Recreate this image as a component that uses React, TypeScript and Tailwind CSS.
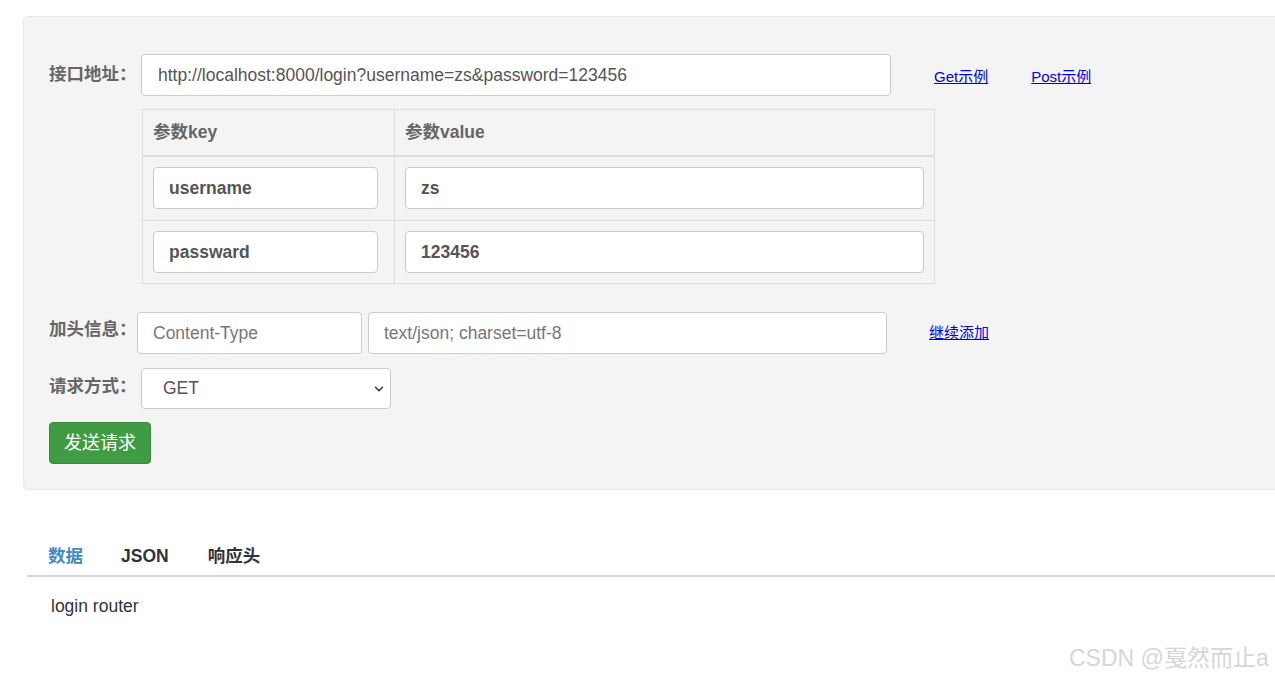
import { ChevronDown } from "lucide-react";

const font = { fontFamily: '"Liberation Sans", Arial, "Noto Sans CJK SC", sans-serif' };

const inputCls =
  "h-[42px] rounded-[4px] border border-[#cccccc] bg-white px-[15px] text-[17.5px] text-[#555555] outline-none";

function Label({ text, w }: { text: string; w: string }) {
  return (
    <label className={`${w} shrink-0 whitespace-nowrap text-[17.5px] font-bold text-[#666666]`}>{text}</label>
  );
}

function ParamRow({ k, v, last }: { k: string; v: string; last?: boolean }) {
  return (
    <div className={`flex ${last ? "" : "border-b border-[#dddddd]"}`}>
      <div className={`w-[252px] shrink-0 border-r border-[#dddddd] px-[10px] pt-[10px] ${last ? "pb-[10px]" : "pb-[11px]"}`}>
        <input readOnly value={k} className={`${inputCls} w-[225px] font-bold`} />
      </div>
      <div className={`flex-1 px-[10px] pt-[10px] ${last ? "pb-[10px]" : "pb-[11px]"}`}>
        <input readOnly value={v} className={`${inputCls} w-[519px] font-bold`} />
      </div>
    </div>
  );
}

export default function App() {
  return (
    <div className="relative h-[677px] w-[1275px] overflow-hidden bg-white" style={font}>
      <div className="ml-[23px] mt-[16px] w-[1300px] rounded-[5px] border border-[#e8e8e8] bg-[#f4f4f4] pb-[25px] pl-[25px] pt-[37px]">
        {/* url */}
        <div className="flex items-start">
          <div className="pt-[7px]">
            <Label text="接口地址：" w="w-[92px] block" />
          </div>
          <input
            readOnly
            value="http://localhost:8000/login?username=zs&password=123456"
            className={`${inputCls} w-[750px] pl-[16px]`}
          />
          <a href="#" className="ml-[43px] mt-[12px] text-[15px] text-[#0000ee] underline">
            Get示例
          </a>
          <a href="#" className="ml-[43px] mt-[12px] text-[15px] text-[#0000ee] underline">
            Post示例
          </a>
        </div>

        {/* params */}
        <div className="ml-[93px] mt-[13px] w-[793px] border border-[#dddddd]">
          <div className="flex h-[47px] border-b-2 border-[#dddddd] text-[17.5px] font-bold text-[#666666]">
            <div className="flex w-[252px] shrink-0 items-center border-r border-[#dddddd] px-[10px]">参数key</div>
            <div className="flex flex-1 items-center px-[10px]">参数value</div>
          </div>
          <ParamRow k="username" v="zs" />
          <ParamRow k="passward" v="123456" last />
        </div>

        {/* headers */}
        <div className="mt-[28px] flex items-start">
          <div className="pt-[4px]">
            <Label text="加头信息：" w="w-[88px] block" />
          </div>
          <input readOnly value="Content-Type" className={`${inputCls} w-[225px] text-[#777777]`} />
          <input
            readOnly
            value="text/json; charset=utf-8"
            className={`${inputCls} ml-[6px] w-[519px] text-[#777777]`}
          />
          <a href="#" className="ml-[42px] mt-[10px] text-[15px] text-[#0000ee] underline">
            继续添加
          </a>
        </div>

        {/* method */}
        <div className="mt-[14px] flex items-start">
          <div className="pt-[5px]">
            <Label text="请求方式：" w="w-[92px] block" />
          </div>
          <div className="relative flex h-[41px] w-[250px] items-center rounded-[4px] border border-[#cccccc] bg-white pl-[21px] text-[17.5px] text-[#555555]">
            GET
            <ChevronDown className="absolute right-[4px] top-[13px] h-[14px] w-[14px] text-[#333333]" strokeWidth={2.5} />
          </div>
        </div>

        <button className="mt-[13px] h-[42px] w-[102px] rounded-[4px] border border-[#3a8a3e] bg-[#3f9c43] text-[18px] text-white">
          发送请求
        </button>
      </div>

      {/* result tabs */}
      <div className="ml-[27px] mt-[53px]">
        <div className="flex h-[34px] items-start border-b-2 border-[#d4d4d4] pl-[21px] text-[17.5px] font-bold">
          <span className="text-[#428bca]">数据</span>
          <span className="ml-[38px] text-[#333333]">JSON</span>
          <span className="ml-[39px] text-[#333333]">响应头</span>
        </div>
        <div className="pl-[24px] pt-[16px] text-[17.5px] text-[#333333]">login router</div>
      </div>

      <div className="absolute left-[1069px] top-[641px] whitespace-nowrap text-[23px] text-[#d6d6d6]">
        CSDN @戛然而止a
      </div>
    </div>
  );
}
